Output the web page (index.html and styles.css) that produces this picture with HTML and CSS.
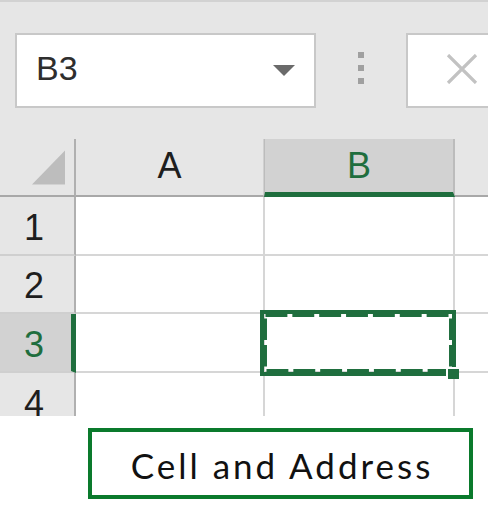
FILE: index.html
```html
<!DOCTYPE html>
<html lang="en">
<head>
    <meta charset="UTF-8">
    <meta name="viewport" content="width=device-width, initial-scale=1.0">
    <title>Cell and Address</title>
    <link rel="stylesheet" href="styles.css">
</head>
<body>
    <div class="sheet">
        <div class="toolbar">
            <div class="name-box">
                <span class="name-text">B3</span>
                <svg class="name-arrow" width="22" height="11" viewBox="0 0 22 11">
                    <polygon points="0,0 22,0 11,11" fill="#6a6a6a"/>
                </svg>
            </div>
            <div class="grip">
                <span></span>
                <span></span>
                <span></span>
            </div>
            <div class="formula-box">
                <svg class="cancel-icon" width="32" height="30" viewBox="0 0 32 30">
                    <path d="M2 1 L30 29 M30 1 L2 29" stroke="#c2c2c2" stroke-width="3.2" fill="none"/>
                </svg>
            </div>
        </div>

        <div class="grid">
            <div class="corner">
                <svg width="34" height="35" viewBox="0 0 34 35">
                    <polygon points="34,0 34,35 0,35" fill="#bdbdbd"/>
                </svg>
            </div>
            <div class="col-head">A</div>
            <div class="col-head active">B</div>
            <div class="col-head last"></div>

            <div class="row-head">1</div>
            <div class="cell"></div>
            <div class="cell"></div>
            <div class="cell last"></div>

            <div class="row-head">2</div>
            <div class="cell"></div>
            <div class="cell"></div>
            <div class="cell last"></div>

            <div class="row-head active">3</div>
            <div class="cell"></div>
            <div class="cell selected">
                <div class="selection">
                    <svg class="ants" viewBox="0 0 189 59" preserveAspectRatio="none">
                        <rect x="1.5" y="1.5" width="186" height="56" fill="none" stroke="#1f6e3e" stroke-width="3" stroke-dasharray="22 5"/>
                    </svg>
                    <div class="fill-handle"></div>
                </div>
            </div>
            <div class="cell last"></div>

            <div class="row-head">4</div>
            <div class="cell"></div>
            <div class="cell"></div>
            <div class="cell last"></div>
        </div>
    </div>

    <div class="caption">Cell and Address</div>
</body>
</html>
```

FILE: styles.css
```css
* {
    margin: 0;
    padding: 0;
    box-sizing: border-box;
}

body {
    width: 488px;
    height: 513px;
    overflow: hidden;
    background: #ffffff;
    font-family: 'Liberation Sans', Arial, sans-serif;
}

.sheet {
    background: #e6e6e6;
    border-top: 2px solid #d2d2d2;
}

/* toolbar: name box + formula bar */
.toolbar {
    display: flex;
    align-items: center;
    height: 137px;
    padding: 31px 0 31px 15px;
}

.name-box {
    width: 301px;
    height: 75px;
    background: #ffffff;
    border: 2px solid #c8c8c8;
    display: flex;
    align-items: center;
    padding: 0 19px 4px 19px;
}

.name-text {
    flex: 1;
    font-size: 34px;
    color: #2e2e2e;
}

.name-arrow {
    margin-top: 4px;
}

.grip {
    width: 90px;
    display: flex;
    flex-direction: column;
    align-items: center;
    gap: 7px;
    padding-bottom: 5px;
}

.grip span {
    width: 6px;
    height: 6px;
    background: #a0a0a0;
}

.formula-box {
    flex: 1;
    height: 75px;
    background: #ffffff;
    border: 2px solid #c8c8c8;
    border-right: none;
    padding: 0 0 4px 38px;
    display: flex;
    align-items: center;
}

/* spreadsheet grid, last row cut off by the picture */
.grid {
    display: grid;
    grid-template-columns: 76px 189px 190px 1fr;
    grid-template-rows: 58px 59px 58px 59px 59px;
    height: 277px;
    overflow: hidden;
    font-size: 36px;
    color: #1e1e1e;
}

.corner {
    border-right: 2px solid #b0b0b0;
    border-bottom: 2px solid #a8a8a8;
    display: flex;
    align-items: flex-end;
    padding: 0 9px 10px 32px;
}

.col-head {
    border-right: 2px solid #d0d0d0;
    border-bottom: 2px solid #a8a8a8;
    display: flex;
    align-items: center;
    justify-content: center;
    padding-bottom: 2px;
}

.col-head.active {
    background: #d2d2d2;
    color: #1f6e3e;
    border-left: 1px solid #bcbcbc;
    border-right-color: #bcbcbc;
    border-bottom: 5px solid #1f6e3e;
    margin-left: -1px;
    padding-top: 3px;
}

.col-head.last {
    border-right: none;
}

.row-head {
    border-right: 2px solid #b0b0b0;
    border-bottom: 2px solid #cfcfcf;
    display: flex;
    align-items: center;
    justify-content: center;
    padding: 4px 6px 0 0;
}

.row-head.active {
    background: #d2d2d2;
    color: #1f6e3e;
    border-right: 5px solid #1f6e3e;
    padding-right: 3px;
}

.cell {
    background: #ffffff;
    border-right: 2px solid #d6d6d6;
    border-bottom: 2px solid #d6d6d6;
}

.cell.last {
    border-right: none;
}

.cell.selected {
    position: relative;
}

.selection {
    position: absolute;
    left: -5px;
    top: -4px;
    right: -3px;
    bottom: -5px;
    border: 4px solid #1f6e3e;
}

.ants {
    display: block;
    width: 100%;
    height: 100%;
}

.fill-handle {
    position: absolute;
    right: -7px;
    bottom: -7px;
    width: 13px;
    height: 12px;
    background: #1f6e3e;
    border-left: 2px solid #ffffff;
    border-top: 2px solid #ffffff;
}

/* caption below the picture */
.caption {
    margin: 12px 0 0 88px;
    width: 385px;
    height: 71px;
    border: 4px solid #0a7a2c;
    display: flex;
    align-items: center;
    justify-content: center;
    padding: 3px 0 0 3px;
    font-family: 'Lato', sans-serif;
    font-size: 35px;
    color: #111111;
    letter-spacing: 3px;
}
```
